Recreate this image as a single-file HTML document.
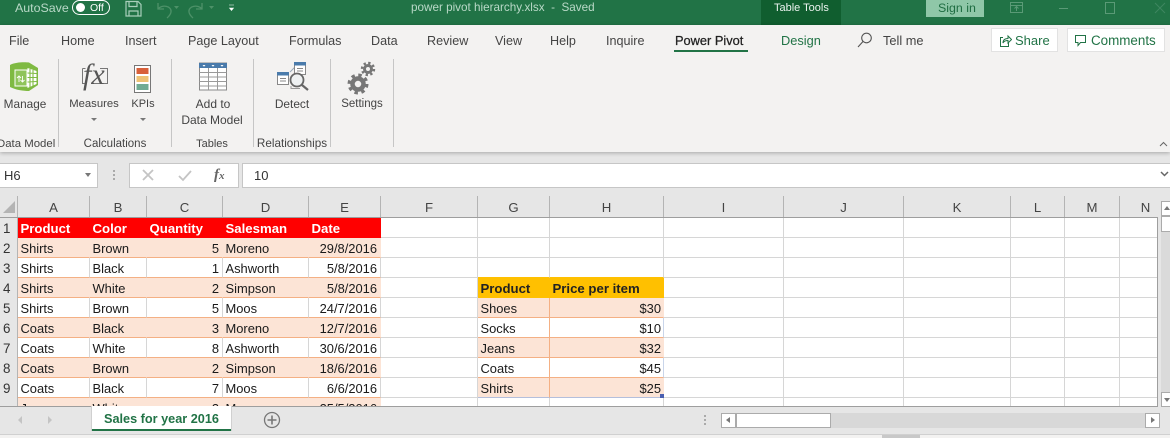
<!DOCTYPE html>
<html><head><meta charset="utf-8"><title>power pivot hierarchy.xlsx</title>
<style>
html,body{margin:0;padding:0}
body{width:1170px;height:438px;overflow:hidden;position:relative;background:#e6e6e6;font-family:"Liberation Sans",sans-serif;color:#444}
.a{position:absolute}
.t{position:absolute;white-space:nowrap;font-size:12.6px;line-height:16px}
.c{transform:translateX(-50%)}
.w{color:#b9d9c7}
.hd{position:absolute;top:196px;height:21px;line-height:24px;text-align:center;font-size:13.2px;color:#444;border-right:1px solid #b4b4b4;box-sizing:border-box}
.rn{position:absolute;left:3px;font-size:13.4px;line-height:22px;color:#333}
.sep{position:absolute;top:59px;width:1px;height:88px;background:#c6c6c6}
table{position:absolute;border-collapse:separate;border-spacing:0;table-layout:fixed;font-size:12.9px;color:#1a1a1a}
td{height:20px;padding:2px 3px 0 2.5px;box-sizing:border-box;white-space:nowrap;overflow:hidden;line-height:17px;border-bottom:1px solid #d6d6d6;border-right:1px solid #d6d6d6}
td.r{text-align:right}
tr.h td{background:#f00;color:#fff;font-weight:bold;font-size:13.2px;border-color:#f00}
tr.p td.x{background:#fce4d6;border-bottom-color:#f4b084;border-right-color:#fce4d6}
tr.q td.x{border-bottom-color:#f4b084}
.arr{position:absolute;width:0;height:0;border-left:3px solid transparent;border-right:3px solid transparent;border-top:3px solid #777}
.btn{position:absolute;top:28px;height:24px;background:#fff;border:1px solid #e2e2e2;box-sizing:border-box;color:#217346;font-size:13px;line-height:23px;white-space:nowrap}
</style></head><body>

<!-- Title bar -->
<div class="a" style="left:0;top:0;width:1170px;height:25px;background:#217346"></div>
<div class="a" style="left:761px;top:0;width:80px;height:25px;background:#105e2f"></div>
<div class="a" style="left:926px;top:0;width:58px;height:17px;background:#8fc7a8"></div>
<div class="t w" style="left:15px;top:0;font-size:12.4px">AutoSave</div>
<div class="a" style="left:72px;top:0;width:38px;height:15px;border:1px solid #fff;border-radius:8px;box-sizing:border-box"></div>
<div class="a" style="left:76px;top:3px;width:9px;height:9px;border-radius:50%;background:#fff"></div>
<div class="t" style="left:90px;top:0;font-size:10.5px;color:#fff">Off</div>
<svg class="a" style="left:120px;top:0" width="125" height="20" fill="none">
<path d="M6 1.500h12l3 3v11.500H6z" stroke="#a8cfba" stroke-width="1.200"/><path d="M9 1.500v5h8v-5M9 16v-5h9v5" stroke="#a8cfba" stroke-width="1.200"/>
<path d="M38 3v6h6M38 9c4-5 14-3 13 3-.5 3-2 4-4 6" stroke="#4d9168" stroke-width="1.300"/><path d="M54 6h5l-2.500 3z" fill="#4d9168"/>
<path d="M82 3v6h-6M82 9c-4-5-14-3-13 3 .5 3 2 4 4 6" stroke="#4d9168" stroke-width="1.300"/><path d="M89 6h5l-2.500 3z" fill="#4d9168"/>
<path d="M109 5h5M109.500 8h4l-2 2.500z" fill="#fff" stroke="#fff" stroke-width=".6"/>
</svg>
<div class="t w" style="left:411px;top:0;font-size:11.700px">power pivot hierarchy.xlsx&nbsp; -&nbsp; Saved</div>
<div class="t" style="left:774px;top:0;font-size:11px;color:#eaf3ee">Table Tools</div>
<div class="t" style="left:938px;top:0;font-size:12.4px;color:#1f6d42">Sign in</div>
<svg class="a" style="left:1005px;top:0" width="165" height="18" fill="none" stroke="#5a9a76">
<path d="M5.500 2.500h12v10h-12zM5.500 5.500h12M11.500 11V7M9.500 8.500l2-2 2 2"/>
<path d="M54 8.500h9"/>
<path d="M100.500 2.500h9v11h-9z"/>
<path d="M150 3l10 10M160 3l-10 10" stroke="#3f8660"/>
</svg>

<!-- Ribbon -->
<div class="a" style="left:0;top:25px;width:1170px;height:127px;background:#f3f2f1;box-shadow:0 1px 4px rgba(0,0,0,.28)"></div>
<div class="t" style="left:9px;top:33px">File</div>
<div class="t" style="left:61px;top:33px">Home</div>
<div class="t" style="left:125px;top:33px">Insert</div>
<div class="t" style="left:188px;top:33px">Page Layout</div>
<div class="t" style="left:289px;top:33px">Formulas</div>
<div class="t" style="left:371px;top:33px">Data</div>
<div class="t" style="left:427px;top:33px">Review</div>
<div class="t" style="left:495px;top:33px">View</div>
<div class="t" style="left:550px;top:33px">Help</div>
<div class="t" style="left:606px;top:33px">Inquire</div>
<div class="t" style="left:675px;top:33px;color:#222;-webkit-text-stroke:.25px #222;font-size:12.8px">Power Pivot</div>
<div class="a" style="left:674px;top:50px;width:74px;height:2px;background:#217346"></div>
<div class="t" style="left:781px;top:33px;color:#217346;font-size:12.8px">Design</div>
<svg class="a" style="left:856px;top:31px" width="18" height="18" fill="none" stroke="#555" stroke-width="1.100"><circle cx="10.500" cy="7" r="4.800"/><path d="M7 10.500L2 16"/></svg>
<div class="t" style="left:883px;top:33px;font-size:12.8px">Tell me</div>
<div class="btn" style="left:991px;width:67px;padding-left:23px">Share</div>
<svg class="a" style="left:998px;top:33px" width="14" height="15" fill="none" stroke="#217346"><path d="M5 4.500H2.500v9h8V9M5 10c0-3 2-4.500 5-4.500V3l3.500 3.500L10 10V7.500C8 7.500 6 8 5 10z"/></svg>
<div class="btn" style="left:1067px;width:98px;padding-left:23px;font-size:13.400px">Comments</div>
<svg class="a" style="left:1074px;top:34px" width="14" height="14" fill="none" stroke="#217346"><path d="M1.500 1.500h10v7H6.500l-2.500 3v-3H1.500z"/></svg>

<!-- Ribbon separators -->
<div class="sep" style="left:58px"></div>
<div class="sep" style="left:171px"></div>
<div class="sep" style="left:253px"></div>
<div class="sep" style="left:330px"></div>
<div class="sep" style="left:393px"></div>

<!-- Manage icon -->
<svg class="a" style="left:8px;top:60px" width="32" height="32">
<path d="M2 5c5-3 15-3 19-2.500L30 8v17l-9 6c-6 0-13-1-19-4z" fill="#7fba42"/>
<path d="M7 10h12v16H7z" fill="#8fc45a" stroke="#fff" stroke-width="1"/>
<path d="M19.500 8l9 3v13l-9 4z" fill="#fff"/>
<path d="M22 9v18M25 10v16M19.500 13l9 .5M19.500 17.500h9M19.500 22l9-.5" stroke="#7fba42" stroke-width="1.100" fill="none"/>
<path d="M11 22v-6m-2 2l2-2 2 2M14.500 16v6m-2-2 2 2 2-2" stroke="#fff" fill="none" stroke-width=".9"/>
</svg>
<div class="t c" style="left:25px;top:96px;font-size:11.800px">Manage</div>
<div class="t" style="left:-3px;top:136px;font-size:11.400px">Data Model</div>

<!-- Measures icon -->
<svg class="a" style="left:78px;top:58px" width="34" height="34">
<path d="M4.500 10.500h3M22 10.500h7.500v15H13M4.500 10.500v15h2" fill="none" stroke="#777"/>
<text x="5" y="26" font-family="Liberation Serif,serif" font-style="italic" font-size="30" fill="#555">fx</text>
</svg>
<div class="t c" style="left:94px;top:96px;font-size:11.300px">Measures</div>
<div class="arr" style="left:91px;top:118px"></div>
<!-- KPI icon -->
<svg class="a" style="left:133px;top:64px" width="20" height="30">
<rect x="1.500" y="1.500" width="16" height="27" fill="#fff" stroke="#777"/>
<rect x="3.500" y="4" width="12" height="6" fill="#d8603a"/>
<rect x="3.500" y="12" width="12" height="6" fill="#eec274"/>
<rect x="3.500" y="20" width="12" height="6" fill="#70ab93"/>
</svg>
<div class="t c" style="left:143px;top:96px;font-size:11px">KPIs</div>
<div class="arr" style="left:140px;top:118px"></div>
<div class="t c" style="left:115px;top:136px;font-size:11.500px">Calculations</div>

<!-- Table icon -->
<svg class="a" style="left:198px;top:62px" width="30" height="30">
<rect x="1.500" y="1" width="27" height="27" fill="#fff" stroke="#8a8a8a"/>
<rect x="1" y="1" width="28" height="5" fill="#4a7bab"/>
<path d="M1.500 10.500h27M1.500 15h27M1.500 19.500h27M1.500 24h27M10.500 6v22M19.500 6v22" stroke="#9a9a9a" fill="none"/>
<path d="M4.500 3h3l-1.500 1.800zM13.500 3h3l-1.500 1.800zM22.500 3h3l-1.500 1.800z" fill="#fff"/>
</svg>
<div class="t c" style="left:213px;top:96px;font-size:12px">Add to</div>
<div class="t c" style="left:212px;top:112px;font-size:12px">Data Model</div>
<div class="t c" style="left:212px;top:136px;font-size:11px">Tables</div>

<!-- Detect icon -->
<svg class="a" style="left:276px;top:60px" width="34" height="34" fill="none">
<path d="M14 12L20 6" stroke="#9ab" stroke-width="1"/>
<rect x="1.500" y="12.500" width="11" height="12" fill="#fff" stroke="#888"/><rect x="1" y="12" width="12" height="3.500" fill="#4a7bab"/>
<path d="M4 18.500h6M4 21h6" stroke="#888"/>
<rect x="18.500" y="2.500" width="11" height="12" fill="#fff" stroke="#888"/><rect x="18" y="2" width="12" height="3.500" fill="#4a7bab"/>
<path d="M21 8.500h6M21 11h6" stroke="#888"/>
<circle cx="21" cy="20" r="6.500" fill="#eef1f2" stroke="#666" stroke-width="1.800"/>
<path d="M26 25l6 5" stroke="#666" stroke-width="2.200"/>
<path d="M15 26v2.500h9" stroke="#999"/>
</svg>
<div class="t c" style="left:292px;top:96px;font-size:11.900px">Detect</div>
<div class="t c" style="left:292px;top:136px;font-size:11.700px">Relationships</div>

<!-- Settings gears -->
<svg class="a" style="left:346px;top:60px" width="32" height="36" fill="none" stroke="#777">
<circle cx="12" cy="24" r="5.500" stroke-width="4.500"/>
<circle cx="12" cy="24" r="9" stroke-width="3" stroke-dasharray="3.500 3.570"/>
<circle cx="22" cy="9" r="3.500" stroke-width="3"/>
<circle cx="22" cy="9" r="6" stroke-width="2.400" stroke-dasharray="2.350 2.360"/>
</svg>
<div class="t c" style="left:362px;top:96px;font-size:11.500px">Settings</div>
<svg class="a" style="left:1159px;top:141px" width="9" height="6" fill="none" stroke="#666"><path d="M1 5l3.500-3.500L8 5"/></svg>

<!-- Formula bar -->
<div class="a" style="left:-1px;top:163px;width:99px;height:25px;background:#fff;border:1px solid #c6c6c6;box-sizing:border-box"></div>
<div class="t" style="left:4px;top:168px;font-size:13px;color:#333">H6</div>
<div class="a" style="left:85px;top:173px;width:0;height:0;border-left:3.500px solid transparent;border-right:3.500px solid transparent;border-top:4px solid #777"></div>
<div class="a" style="left:113px;top:170px;width:2px;height:2px;background:#aaa;box-shadow:0 4px 0 #aaa,0 8px 0 #aaa"></div>
<div class="a" style="left:129px;top:163px;width:110px;height:25px;background:#fff;border:1px solid #c6c6c6;box-sizing:border-box"></div>
<svg class="a" style="left:140px;top:167px" width="55" height="16" fill="none" stroke="#c4c4c4" stroke-width="1.800"><path d="M3 3l10 10M13 3L3 13M39 9l4 4 8-9"/></svg>
<div class="t" style="left:214px;top:167px;font:italic bold 15px 'Liberation Serif',serif;color:#666">f<span style="font-size:11px">x</span></div>
<div class="a" style="left:242px;top:163px;width:930px;height:25px;background:#fff;border:1px solid #c6c6c6;box-sizing:border-box"></div>
<div class="t" style="left:254px;top:168px;font-size:13px;color:#333">10</div>
<svg class="a" style="left:1160px;top:171px" width="9" height="7" fill="none" stroke="#666" stroke-width="1.500"><path d="M1 1l3.500 3.500L8 1"/></svg>

<!-- Grid header -->
<svg class="a" style="left:3px;top:201px" width="13" height="13"><path d="M12 0v12H0z" fill="#b4b4b4"/></svg>
<div class="a" style="left:17px;top:196px;width:1px;height:210px;background:#b4b4b4"></div>
<div class="hd" style="left:18px;width:72px">A</div>
<div class="hd" style="left:90px;width:57px">B</div>
<div class="hd" style="left:147px;width:76px">C</div>
<div class="hd" style="left:223px;width:86px">D</div>
<div class="hd" style="left:309px;width:72px">E</div>
<div class="hd" style="left:381px;width:97px">F</div>
<div class="hd" style="left:478px;width:72px">G</div>
<div class="hd" style="left:550px;width:114px">H</div>
<div class="hd" style="left:664px;width:120px">I</div>
<div class="hd" style="left:784px;width:120px">J</div>
<div class="hd" style="left:904px;width:107px">K</div>
<div class="hd" style="left:1011px;width:54px">L</div>
<div class="hd" style="left:1065px;width:55px">M</div>
<div class="hd" style="left:1120px;width:37px;border:0;padding-left:14px;box-sizing:border-box">N</div>
<div class="a" style="left:0;top:217px;width:1157px;height:1px;background:#9e9e9e"></div>
<div class="rn" style="top:218px">1</div><div class="rn" style="top:238px">2</div><div class="rn" style="top:258px">3</div><div class="rn" style="top:278px">4</div><div class="rn" style="top:298px">5</div><div class="rn" style="top:318px">6</div><div class="rn" style="top:338px">7</div><div class="rn" style="top:358px">8</div><div class="rn" style="top:378px">9</div>

<!-- Grid -->
<div class="a" style="left:18px;top:218px;width:1139px;height:188px;background:#fff;overflow:hidden">
<table style="left:0;top:0;width:1139px">
<colgroup><col style="width:72px"><col style="width:57px"><col style="width:76px"><col style="width:86px"><col style="width:72px"><col style="width:97px"><col style="width:72px"><col style="width:114px"><col style="width:120px"><col style="width:120px"><col style="width:107px"><col style="width:54px"><col style="width:55px"><col style="width:37px"></colgroup>
<tr class="h"><td>Product</td><td>Color</td><td>Quantity</td><td>Salesman</td><td>Date</td><td style="background:#fff;border-color:#d6d6d6"></td><td style="background:#fff;border-color:#d6d6d6"></td><td style="background:#fff;border-color:#d6d6d6"></td><td style="background:#fff;border-color:#d6d6d6"></td><td style="background:#fff;border-color:#d6d6d6"></td><td style="background:#fff;border-color:#d6d6d6"></td><td style="background:#fff;border-color:#d6d6d6"></td><td style="background:#fff;border-color:#d6d6d6"></td><td style="background:#fff;border-color:#d6d6d6;border-right:0"></td></tr>
<tr class="p"><td class="x">Shirts</td><td class="x">Brown</td><td class="x r">5</td><td class="x">Moreno</td><td class="x r">29/8/2016</td><td></td><td></td><td></td><td></td><td></td><td></td><td></td><td></td><td style="border-right:0"></td></tr>
<tr class="q"><td class="x">Shirts</td><td class="x">Black</td><td class="x r">1</td><td class="x">Ashworth</td><td class="x r">5/8/2016</td><td></td><td style="border-bottom-color:#ffc000"></td><td style="border-bottom-color:#ffc000"></td><td></td><td></td><td></td><td></td><td></td><td style="border-right:0"></td></tr>
</table>
<table style="left:0;top:60px;width:1139px">
<colgroup><col style="width:72px"><col style="width:57px"><col style="width:76px"><col style="width:86px"><col style="width:72px"><col style="width:97px"><col style="width:72px"><col style="width:114px"><col style="width:120px"><col style="width:120px"><col style="width:107px"><col style="width:54px"><col style="width:55px"><col style="width:37px"></colgroup>
<tr class="p"><td class="x">Shirts</td><td class="x">White</td><td class="x r">2</td><td class="x">Simpson</td><td class="x r">5/8/2016</td><td></td><td style="background:#ffc000;border-color:#ffc000;font-weight:bold;font-size:13.2px;color:#222">Product</td><td style="background:#ffc000;border-color:#ffc000;font-weight:bold;font-size:13.2px;color:#222">Price per item</td><td></td><td></td><td></td><td></td><td></td><td style="border-right:0"></td></tr>
<tr class="q"><td class="x">Shirts</td><td class="x">Brown</td><td class="x r">5</td><td class="x">Moos</td><td class="x r">24/7/2016</td><td></td><td style="background:#fce4d6;border-color:#f4b084">Shoes</td><td class="r" style="background:#fce4d6;border-bottom-color:#f4b084;border-right-color:#fce4d6;padding-right:2px">$30</td><td></td><td></td><td></td><td></td><td></td><td style="border-right:0"></td></tr>
<tr class="p"><td class="x">Coats</td><td class="x">Black</td><td class="x r">3</td><td class="x">Moreno</td><td class="x r">12/7/2016</td><td></td><td style="border-color:#f4b084">Socks</td><td class="r" style="border-bottom-color:#f4b084;border-right-color:#c9d5ea;padding-right:2px">$10</td><td></td><td></td><td></td><td></td><td></td><td style="border-right:0"></td></tr>
<tr class="q"><td class="x">Coats</td><td class="x">White</td><td class="x r">8</td><td class="x">Ashworth</td><td class="x r">30/6/2016</td><td></td><td style="background:#fce4d6;border-color:#f4b084">Jeans</td><td class="r" style="background:#fce4d6;border-bottom-color:#f4b084;border-right-color:#fce4d6;padding-right:2px">$32</td><td></td><td></td><td></td><td></td><td></td><td style="border-right:0"></td></tr>
<tr class="p"><td class="x">Coats</td><td class="x">Brown</td><td class="x r">2</td><td class="x">Simpson</td><td class="x r">18/6/2016</td><td></td><td style="border-color:#f4b084">Coats</td><td class="r" style="border-bottom-color:#f4b084;border-right-color:#c9d5ea;padding-right:2px">$45</td><td></td><td></td><td></td><td></td><td></td><td style="border-right:0"></td></tr>
<tr class="q"><td class="x">Coats</td><td class="x">Black</td><td class="x r">7</td><td class="x">Moos</td><td class="x r">6/6/2016</td><td></td><td style="background:#fce4d6;border-right-color:#f4b084;border-bottom-color:#b4bfdc">Shirts</td><td class="r" style="background:#fce4d6;border-bottom-color:#b4bfdc;border-right-color:#fce4d6;padding-right:2px">$25</td><td></td><td></td><td></td><td></td><td></td><td style="border-right:0"></td></tr>
<tr class="p"><td class="x">Jeans</td><td class="x">White</td><td class="x r">3</td><td class="x">Moreno</td><td class="x r">25/5/2016</td><td></td><td></td><td></td><td></td><td></td><td></td><td></td><td></td><td style="border-right:0"></td></tr>
</table>
<div class="a" style="left:642px;top:176px;width:4px;height:4px;background:#4a5fb0"></div>
</div>
<div class="a" style="left:1157px;top:217px;width:1px;height:190px;background:#9e9e9e"></div>
<div class="a" style="left:0;top:406px;width:1158px;height:1px;background:#9e9e9e"></div>

<!-- Vertical scrollbar -->
<div class="a" style="left:1161px;top:206px;width:12px;height:200px;background:#dadada"></div>
<div class="a" style="left:1161px;top:201px;width:12px;height:15px;background:#fff;border:1px solid #ababab;box-sizing:border-box"></div>
<div class="a" style="left:1164px;top:206px;width:0;height:0;border-left:3.500px solid transparent;border-right:3.500px solid transparent;border-bottom:4px solid #777"></div>
<div class="a" style="left:1161px;top:216px;width:12px;height:16px;background:#fff;border:1px solid #ababab;box-sizing:border-box"></div>
<div class="a" style="left:1161px;top:392px;width:12px;height:15px;background:#fff;border:1px solid #ababab;box-sizing:border-box"></div>
<div class="a" style="left:1164px;top:398px;width:0;height:0;border-left:3.500px solid transparent;border-right:3.500px solid transparent;border-top:4px solid #777"></div>

<!-- Sheet tab bar -->
<div class="a" style="left:0;top:407px;width:1170px;height:27px;background:#e6e6e6"></div>
<div class="a" style="left:18px;top:416px;width:0;height:0;border-top:4px solid transparent;border-bottom:4px solid transparent;border-right:4px solid #c4c4c4"></div>
<div class="a" style="left:48px;top:416px;width:0;height:0;border-top:4px solid transparent;border-bottom:4px solid transparent;border-left:4px solid #c4c4c4"></div>
<div class="a" style="left:92px;top:406px;width:139px;height:25px;background:#fff;border-bottom:2px solid #217346;box-sizing:border-box;box-shadow:-1px 0 0 #d0d0d0,1px 0 0 #d0d0d0"></div>
<div class="t" style="left:104px;top:411px;font-size:12.700px;font-weight:bold;color:#217346">Sales for year 2016</div>
<svg class="a" style="left:263px;top:411px" width="18" height="18" fill="none" stroke="#777"><circle cx="9" cy="9" r="7.500" stroke-width="1.300"/><path d="M9 4.500v9M4.500 9h9" stroke-width="1.600"/></svg>
<div class="a" style="left:704px;top:415px;width:2px;height:2px;background:#aaa;box-shadow:0 4px 0 #aaa,0 8px 0 #aaa"></div>

<!-- Horizontal scrollbar -->
<div class="a" style="left:721px;top:413px;width:438px;height:15px;background:#d8d8d8"></div>
<div class="a" style="left:721px;top:413px;width:15px;height:15px;background:#fff;border:1px solid #ababab;box-sizing:border-box"></div>
<div class="a" style="left:726px;top:417px;width:0;height:0;border-top:3.500px solid transparent;border-bottom:3.500px solid transparent;border-right:4px solid #777"></div>
<div class="a" style="left:736px;top:413px;width:95px;height:15px;background:#fff;border:1px solid #ababab;box-sizing:border-box"></div>
<div class="a" style="left:1145px;top:413px;width:15px;height:15px;background:#fff;border:1px solid #ababab;box-sizing:border-box"></div>
<div class="a" style="left:1151px;top:417px;width:0;height:0;border-top:3.500px solid transparent;border-bottom:3.500px solid transparent;border-left:4px solid #777"></div>

<!-- Status strip -->
<div class="a" style="left:0;top:434px;width:1170px;height:4px;background:#f3f2f1;border-top:1px solid #d0d0d0;box-sizing:border-box"></div>
<div class="a" style="left:882px;top:435px;width:38px;height:3px;background:#c8c8c8"></div>
</body></html>
